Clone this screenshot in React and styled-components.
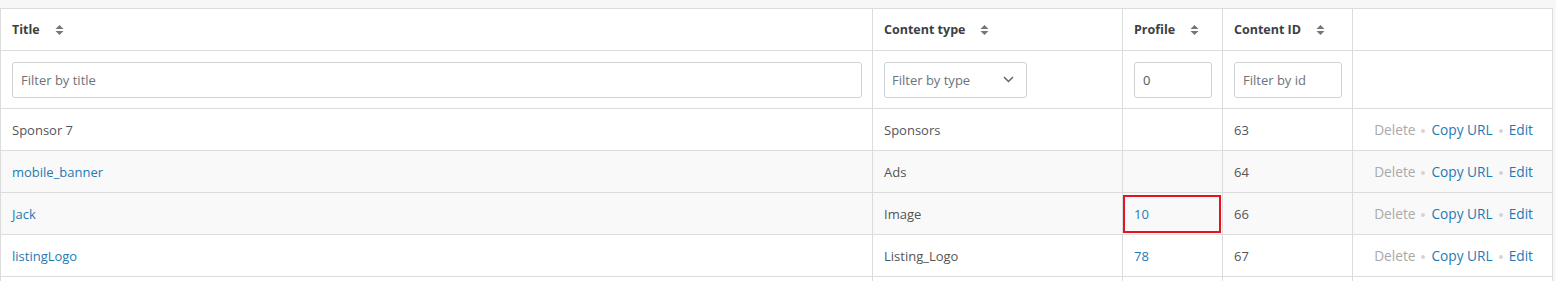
import React from 'react';
import styled, { createGlobalStyle } from 'styled-components';

const GlobalStyle = createGlobalStyle`
  html, body {
    margin: 0;
    padding: 0;
    background: #f7f7f7;
  }
  body {
    font-family: "Open Sans", "Noto Sans", sans-serif;
    font-size: 13px;
    color: #555;
  }
`;

const Page = styled.div`
  padding-top: 8px;
  width: 1552px;
`;

const Table = styled.table`
  width: 1552px;
  border-collapse: collapse;
  table-layout: fixed;
  background: #fff;
  border: 1px solid #dcdcdc;
`;

const HeadCell = styled.th`
  height: 41px;
  padding: 0 11px;
  text-align: left;
  font-weight: 700;
  font-size: 12.5px;
  color: #3b3f44;
  border: 1px solid #dcdcdc;
  white-space: nowrap;
`;

const SortWrap = styled.span`
  display: inline-flex;
  align-items: center;
  gap: 15px;
`;

const FilterCell = styled.td`
  height: 57px;
  padding: 0 10px 0 11px;
  border: 1px solid #dcdcdc;
`;

const Input = styled.input`
  box-sizing: border-box;
  width: 100%;
  height: 36px;
  padding: 0 8px;
  border: 1px solid #cfd3d8;
  border-radius: 3px;
  font-family: inherit;
  font-size: 13px;
  color: #555;
  background: #fff;
  outline: none;
  &::placeholder {
    color: #6c737a;
  }
`;

const SelectBox = styled.div`
  box-sizing: border-box;
  width: 143px;
  height: 36px;
  padding: 0 12px 0 7px;
  border: 1px solid #cfd3d8;
  border-radius: 3px;
  display: flex;
  align-items: center;
  justify-content: space-between;
  color: #6c737a;
`;

const Row = styled.tr`
  background: ${p => (p.shaded ? '#f9f9f9' : '#fff')};
`;

const Cell = styled.td`
  height: 41px;
  padding: 0 11px;
  border: 1px solid #dcdcdc;
  color: ${p => (p.link ? '#1f7ab5' : '#555')};
  white-space: nowrap;
  position: relative;
`;

const Highlight = styled.span`
  position: absolute;
  left: 0;
  top: 2px;
  right: 1px;
  bottom: 1px;
  border: 2px solid #e3141f;
  pointer-events: none;
`;

const ActionCell = styled.td`
  height: 41px;
  padding: 0 19px 0 11px;
  border: 1px solid #dcdcdc;
  text-align: right;
  white-space: nowrap;
  font-size: 13.7px;
`;

const Action = styled.span`
  color: ${p => (p.muted ? '#a9a9a9' : '#1f7ab5')};
`;

const Dot = styled.span`
  display: inline-block;
  width: 4px;
  height: 4px;
  border-radius: 50%;
  background: #d4d4d4;
  margin: 0 6px;
  vertical-align: middle;
`;

const SortIcon = () => (
  <svg width="9" height="12" viewBox="0 0 9 12">
    <path d="M4.5 1 L8.5 5 H0.5 Z" fill="#707780" />
    <path d="M4.5 11 L8.5 7 H0.5 Z" fill="#707780" />
  </svg>
);

const Chevron = () => (
  <svg width="11" height="7" viewBox="0 0 11 7">
    <path d="M1 1 L5.5 5.5 L10 1" fill="none" stroke="#5f666d" strokeWidth="1.5" />
  </svg>
);

const rows = [
  { title: 'Sponsor 7', titleLink: false, type: 'Sponsors', profile: '', id: '63', shaded: false },
  { title: 'mobile_banner', titleLink: true, type: 'Ads', profile: '', id: '64', shaded: true },
  { title: 'Jack', titleLink: true, type: 'Image', profile: '10', id: '66', shaded: true, marked: true },
  { title: 'listingLogo', titleLink: true, type: 'Listing_Logo', profile: '78', id: '67', shaded: false },
];

const headers = ['Title', 'Content type', 'Profile', 'Content ID'];

const App = () => {
  return (
    <Page>
      <GlobalStyle />
      <Table>
        <colgroup>
          <col style={{ width: 872 }} />
          <col style={{ width: 250 }} />
          <col style={{ width: 100 }} />
          <col style={{ width: 130 }} />
          <col style={{ width: 200 }} />
        </colgroup>
        <thead>
          <tr>
            {headers.map(h => (
              <HeadCell key={h}>
                <SortWrap>
                  {h}
                  <SortIcon />
                </SortWrap>
              </HeadCell>
            ))}
            <HeadCell />
          </tr>
          <tr>
            <FilterCell>
              <Input placeholder="Filter by title" />
            </FilterCell>
            <FilterCell>
              <SelectBox>
                Filter by type
                <Chevron />
              </SelectBox>
            </FilterCell>
            <FilterCell>
              <Input defaultValue="0" />
            </FilterCell>
            <FilterCell>
              <Input placeholder="Filter by id" />
            </FilterCell>
            <FilterCell />
          </tr>
        </thead>
        <tbody>
          {rows.map(r => (
            <Row key={r.id} shaded={r.shaded}>
              <Cell link={r.titleLink}>{r.title}</Cell>
              <Cell>{r.type}</Cell>
              <Cell link>
                {r.profile}
                {r.marked && <Highlight />}
              </Cell>
              <Cell>{r.id}</Cell>
              <ActionCell>
                <Action muted>Delete</Action>
                <Dot />
                <Action>Copy URL</Action>
                <Dot />
                <Action>Edit</Action>
              </ActionCell>
            </Row>
          ))}
          <Row>
            <Cell />
            <Cell />
            <Cell />
            <Cell />
            <ActionCell />
          </Row>
        </tbody>
      </Table>
    </Page>
  );
};

export default App;
